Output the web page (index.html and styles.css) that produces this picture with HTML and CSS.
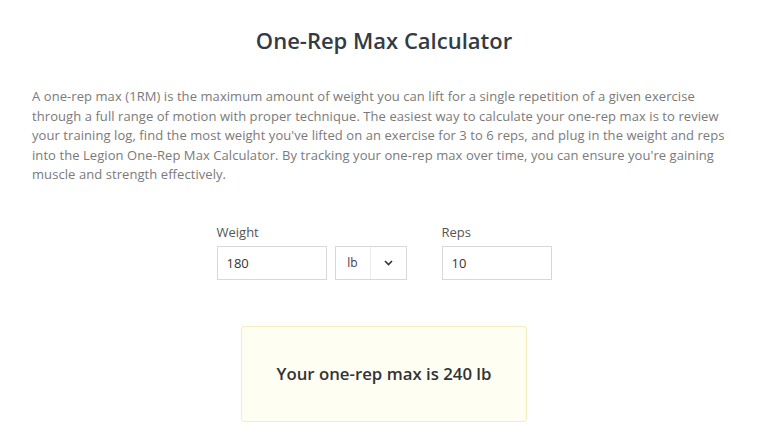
FILE: index.html
```html
<!DOCTYPE html>
<html lang="en">

<head>
    <meta charset="UTF-8" />
    <meta name="viewport" content="width=device-width, initial-scale=1.0" />
    <title>One-Rep Max Calculator</title>
    <link rel="stylesheet" href="styles.css">
</head>

<body>
    <div class="calc-wrapper">
        <h1 class="calc-title">One-Rep Max Calculator</h1>

        <p class="calc-intro">A one-rep max (1RM) is the maximum amount of weight you can lift for a single repetition of a given exercise through a full range of motion with proper technique. The easiest way to calculate your one-rep max is to review your training log, find the most weight you've lifted on an exercise for 3 to 6 reps, and plug in the weight and reps into the Legion One-Rep Max Calculator. By tracking your one-rep max over time, you can ensure you're gaining muscle and strength effectively.</p>

        <div class="calc-form">
            <div class="field">
                <label class="field-label" for="weight">Weight</label>
                <div class="field-row">
                    <input id="weight" class="field-input" type="text" value="180" />
                    <div class="unit-select">
                        <span class="unit-value">lb</span>
                        <span class="unit-arrow">
                            <svg width="9" height="6" viewBox="0 0 9 6">
                                <path d="M1 1 L4.5 4.5 L8 1" fill="none" stroke="#333" stroke-width="1.6" />
                            </svg>
                        </span>
                    </div>
                </div>
            </div>
            <div class="field">
                <label class="field-label" for="reps">Reps</label>
                <div class="field-row">
                    <input id="reps" class="field-input" type="text" value="10" />
                </div>
            </div>
        </div>

        <div class="result-box">Your one-rep max is 240 lb</div>
    </div>
</body>

</html>
```

FILE: styles.css
```css
body {
    margin: 0;
    font-family: 'Open Sans', 'Lato', sans-serif;
    background: #ffffff;
    color: #333;
}

.calc-wrapper {
    display: flex;
    flex-direction: column;
    align-items: center;
    padding: 0 32px;
}

.calc-title {
    margin: 26px 0 0;
    font-size: 22px;
    line-height: 28px;
    font-weight: 600;
    color: #333b44;
}

.calc-intro {
    margin: 33px 0 0;
    font-size: 13px;
    line-height: 19.6px;
    letter-spacing: 0.07px;
    color: #7a7a7a;
}

.calc-form {
    display: flex;
    gap: 35px;
    margin-top: 38px;
}

.field {
    display: flex;
    flex-direction: column;
}

.field-label {
    font-size: 13px;
    line-height: 18px;
    color: #555;
    margin-bottom: 5px;
}

.field-row {
    display: flex;
    gap: 8px;
}

.field-input {
    width: 110px;
    height: 34px;
    box-sizing: border-box;
    border: 1px solid #d8d8d8;
    padding: 0 9px;
    font-family: inherit;
    font-size: 13px;
    color: #333;
    outline: none;
}

.unit-select {
    display: flex;
    width: 72px;
    height: 34px;
    box-sizing: border-box;
    border: 1px solid #d8d8d8;
}

.unit-value {
    width: 34px;
    display: flex;
    align-items: center;
    justify-content: center;
    font-size: 12px;
    color: #4a3a4a;
    border-right: 1px solid #ececec;
}

.unit-arrow {
    flex: 1;
    display: flex;
    align-items: center;
    justify-content: center;
}

.result-box {
    margin-top: 46px;
    width: 286px;
    height: 96px;
    box-sizing: border-box;
    display: flex;
    align-items: center;
    justify-content: center;
    background: #fffef3;
    border: 1px solid #f3ecbc;
    border-radius: 3px;
    font-size: 16.8px;
    font-weight: 600;
    color: #333;
}
```
